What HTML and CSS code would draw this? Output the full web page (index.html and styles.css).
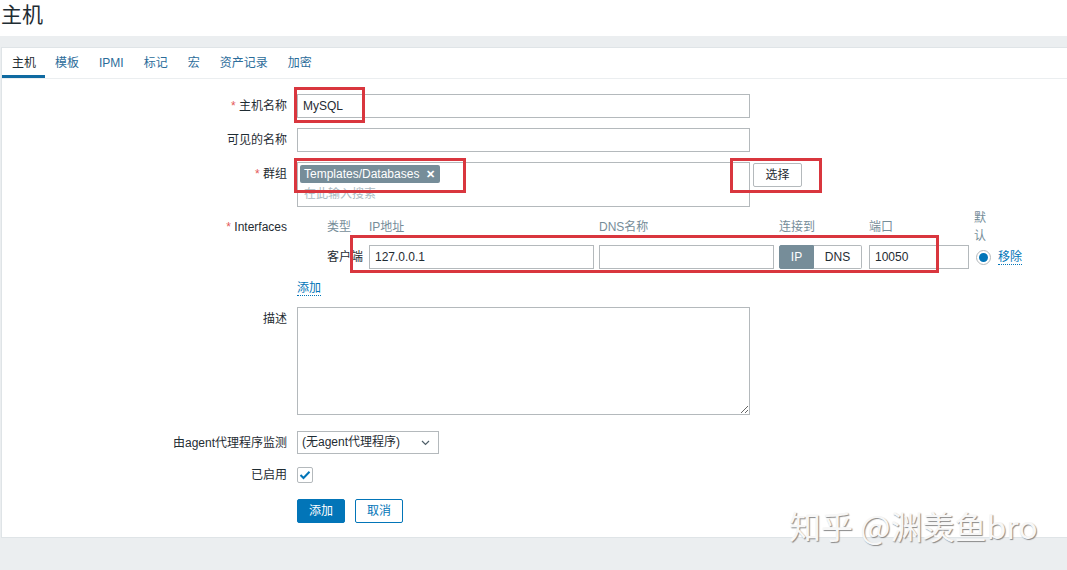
FILE: index.html
```html
<!DOCTYPE html>
<html lang="zh-CN">
<head>
<meta charset="utf-8">
<title>主机</title>
<link rel="stylesheet" href="styles.css">
</head>
<body>
<header class="page-head"><h1>主机</h1></header>
<main class="wrap">
  <section class="card">
    <ul class="tabs">
      <li class="tab active">主机</li>
      <li class="tab">模板</li>
      <li class="tab">IPMI</li>
      <li class="tab">标记</li>
      <li class="tab">宏</li>
      <li class="tab">资产记录</li>
      <li class="tab">加密</li>
    </ul>
    <div class="form">
      <div class="row row-name">
        <div class="lbl"><span class="ast">*</span> 主机名称</div>
        <div class="field"><div class="input w-wide">MySQL</div></div>
      </div>
      <div class="row row-visible">
        <div class="lbl">可见的名称</div>
        <div class="field"><div class="input w-wide"></div></div>
      </div>
      <div class="row row-group">
        <div class="lbl"><span class="ast">*</span> 群组</div>
        <div class="field field-flex">
          <div class="multi">
            <div class="tagline"><span class="tag">Templates/Databases<span class="tag-x">✕</span></span></div>
            <div class="placeholder">在此输入搜索</div>
          </div>
          <div class="btn-grey">选择</div>
        </div>
      </div>
      <div class="row row-if">
        <div class="lbl lbl-if"><span class="ast">*</span> Interfaces</div>
        <div class="field">
          <div class="iftable">
            <div class="ifh">类型</div>
            <div class="ifh">IP地址</div>
            <div class="ifh">DNS名称</div>
            <div class="ifh">连接到</div>
            <div class="ifh">端口</div>
            <div class="ifh ifh-def">默认</div>
            <div class="ifh"></div>

            <div class="ifc iftype">客户端</div>
            <div class="ifc"><div class="input w-ip">127.0.0.1</div></div>
            <div class="ifc"><div class="input w-dns"></div></div>
            <div class="ifc">
              <div class="toggle"><span class="tg tg-on">IP</span><span class="tg tg-off">DNS</span></div>
            </div>
            <div class="ifc"><div class="input w-port">10050</div></div>
            <div class="ifc"><span class="radio"><span class="radio-dot"></span></span></div>
            <div class="ifc"><span class="link">移除</span></div>
          </div>
        </div>
      </div>
      <div class="row row-add">
        <div class="lbl"></div>
        <div class="field"><span class="link">添加</span></div>
      </div>
      <div class="row row-desc">
        <div class="lbl">描述</div>
        <div class="field"><textarea class="textarea"></textarea></div>
      </div>
      <div class="row row-proxy">
        <div class="lbl">由agent代理程序监测</div>
        <div class="field">
          <div class="select">(无agent代理程序)
            <svg class="chev" width="9" height="6" viewBox="0 0 9 6"><path d="M1 1 L4.5 4.5 L8 1" fill="none" stroke="#4f5f69" stroke-width="1.2"/></svg>
          </div>
        </div>
      </div>
      <div class="row row-enabled">
        <div class="lbl">已启用</div>
        <div class="field">
          <div class="checkbox">
            <svg width="12" height="10" viewBox="0 0 12 10"><path d="M1.5 5 L4.5 8 L10.5 1.8" fill="none" stroke="#0275b8" stroke-width="2"/></svg>
          </div>
        </div>
      </div>
      <div class="row row-btns">
        <div class="lbl"></div>
        <div class="field field-btns">
          <div class="btn-primary">添加</div>
          <div class="btn-alt">取消</div>
        </div>
      </div>
    </div>
  </section>
</main>

<div class="anno anno-1"></div>
<div class="anno anno-2"></div>
<div class="anno anno-3"></div>
<div class="anno anno-4"></div>
<div class="watermark">知乎 @渊羡鱼bro</div>
</body>
</html>
```

FILE: styles.css
```css
* { box-sizing: border-box; }
html, body { margin: 0; padding: 0; }
body {
  width: 1067px;
  height: 570px;
  overflow: hidden;
  background: #ebeef0;
  font-family: "Liberation Sans", "Noto Sans CJK SC", sans-serif;
  font-size: 12px;
  color: #1f2c33;
  position: relative;
}
.page-head {
  background: #ffffff;
  height: 36px;
}
.page-head h1 {
  margin: 0;
  padding-left: 1px;
  font-size: 21px;
  font-weight: normal;
  line-height: 30px;
  color: #1f2c33;
}
.wrap {
  padding: 11px 0 0 1px;
}
.card {
  background: #ffffff;
  border: 1px solid #dfe4e7;
  border-right: none;
  height: 491px;
}
.tabs {
  list-style: none;
  margin: 0;
  padding: 0;
  display: flex;
  height: 31px;
  border-bottom: 1px solid #ebeef0;
}
.tab {
  padding: 0 10px;
  line-height: 30px;
  height: 30px;
  color: #2b6c9a;
}
.tab.active {
  color: #1f2c33;
  border-bottom: 3px solid #0f6aa1;
  padding-right: 9px;
}
.form {
  padding-top: 15px;
}
.row {
  display: flex;
  align-items: flex-start;
}
.lbl {
  flex: none;
  width: 285px;
  text-align: right;
  line-height: 24px;
  white-space: nowrap;
}
.ast {
  color: #e45959;
}
.field {
  margin-left: 10px;
}
.field-flex {
  display: flex;
  align-items: flex-start;
}
.input {
  height: 24px;
  border: 1px solid #b4b9bc;
  background: #fff;
  padding: 0 5px;
  line-height: 22px;
  white-space: nowrap;
}
.w-wide { width: 453px; }
.w-ip { width: 225px; }
.w-dns { width: 175px; }
.w-port { width: 100px; }

.row-name, .row-visible { margin-bottom: 10px; }

.row-group { margin-bottom: 4px; }
.multi {
  width: 453px;
  height: 45px;
  border: 1px solid #b4b9bc;
  padding: 2px 2px 0 2px;
}
.tagline { height: 18px; }
.tag {
  display: inline-flex;
  align-items: center;
  height: 18px;
  background: #768d99;
  color: #fff;
  padding: 0 5px 0 4px;
  line-height: 18px;
  border-radius: 2px;
}
.tag-x {
  font-size: 11px;
  font-weight: bold;
  margin-left: 7px;
}
.placeholder {
  color: #acbbc2;
  padding-left: 4px;
  line-height: 22px;
}
.btn-grey {
  margin-left: 3px;
  margin-top: 1px;
  width: 49px;
  height: 24px;
  border: 1px solid #b4b9bc;
  border-radius: 2px;
  text-align: center;
  line-height: 22px;
  color: #1f2c33;
  background: #fff;
}

.row-if { margin-bottom: 11px; }
.lbl-if { line-height: 32px; }
.iftable {
  padding-left: 30px;
  display: grid;
  grid-template-columns: 42px 230px 180px 90px 105px 24px auto;
  grid-template-rows: 32px 24px;
  row-gap: 2px;
}
.ifh {
  color: #768d99;
  align-self: center;
  line-height: 18px;
}
.ifh-def {
  width: 16px;
  line-height: 18px;
}
.ifc {
  align-self: center;
}
.iftype { line-height: 24px; }
.toggle {
  display: flex;
  width: 83px;
  height: 24px;
}
.tg {
  height: 24px;
  line-height: 22px;
  text-align: center;
  border: 1px solid #b4b9bc;
  border-radius: 2px;
}
.tg-on {
  width: 35px;
  background: #768d99;
  border-color: #768d99;
  color: #fff;
  border-radius: 2px 0 0 2px;
}
.tg-off {
  width: 48px;
  color: #1f2c33;
  border-left: none;
  border-radius: 0 2px 2px 0;
}
.radio {
  display: flex;
  align-items: center;
  justify-content: center;
  width: 15px;
  height: 15px;
  margin-left: 2px;
  border: 1px solid #b4b9bc;
  border-radius: 50%;
}
.radio-dot {
  width: 9px;
  height: 9px;
  border-radius: 50%;
  background: #0275b8;
}
.link {
  color: #0275b8;
  border-bottom: 1px dotted #0275b8;
  line-height: 16px;
}
.row-add { margin-bottom: 11px; }
.row-add .lbl { line-height: 16px; }

.row-desc { margin-bottom: 16px; }
.textarea {
  display: block;
  width: 453px;
  height: 108px;
  border: 1px solid #b4b9bc;
  margin: 0;
  padding: 4px;
  font: inherit;
  resize: both;
}
.row-proxy { margin-bottom: 12px; }
.select {
  position: relative;
  width: 142px;
  height: 23px;
  border: 1px solid #b4b9bc;
  padding-left: 4px;
  line-height: 21px;
  white-space: nowrap;
}
.chev {
  position: absolute;
  right: 8px;
  top: 8px;
}
.row-enabled { margin-bottom: 15px; }
.row-enabled .lbl { line-height: 17px; }
.checkbox {
  width: 16px;
  height: 16px;
  border: 1px solid #b4b9bc;
  border-radius: 2px;
  display: flex;
  align-items: center;
  justify-content: center;
}
.field-btns {
  display: flex;
  gap: 10px;
}
.btn-primary, .btn-alt {
  width: 48px;
  height: 24px;
  line-height: 22px;
  text-align: center;
  border-radius: 2px;
  border: 1px solid #0275b8;
}
.btn-primary {
  background: #0275b8;
  color: #fff;
}
.btn-alt {
  background: #fff;
  color: #0275b8;
}

.anno {
  position: absolute;
  border: 3px solid #d9363e;
}
.anno-1 { left: 294px; top: 87px; width: 71px; height: 36px; }
.anno-2 { left: 294px; top: 158px; width: 172px; height: 35px; }
.anno-3 { left: 730px; top: 158px; width: 92px; height: 35px; }
.anno-4 { left: 350px; top: 235px; width: 589px; height: 38px; }

.watermark {
  position: absolute;
  left: 789px;
  top: 502px;
  font-family: "Noto Sans CJK SC", "Liberation Sans", sans-serif;
  font-size: 32px;
  line-height: 46px;
  color: #f7f7f7;
  text-shadow: 1px 1px 1px #8a8a8a;
  white-space: nowrap;
}
```
